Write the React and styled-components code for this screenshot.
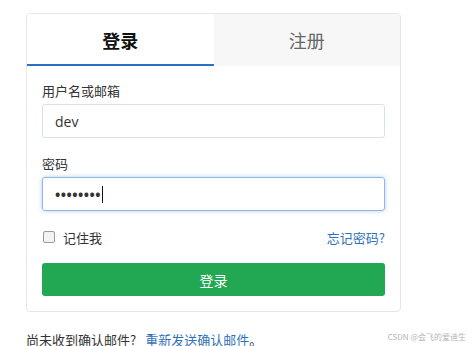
import React from "react";
import styled, { createGlobalStyle } from "styled-components";

const Global = createGlobalStyle`
  html, body { margin: 0; padding: 0; background: #fff; }
  body { font-family: "Noto Sans CJK SC", "Noto Sans", sans-serif; color: #333; }
`;

const Page = styled.div`
  width: 474px;
  height: 346px;
  position: relative;
  padding: 13px 0 0 26px;
  box-sizing: border-box;
  overflow: hidden;
`;

const Card = styled.div`
  width: 375px;
  height: 299px;
  box-sizing: border-box;
  border: 1px solid #e6e6e6;
  border-radius: 4px;
  overflow: hidden;
  display: flex;
  flex-direction: column;
`;

const Tabs = styled.div`
  display: flex;
  height: 52px;
  border-bottom: 1px solid #e9e9e9;
  box-sizing: border-box;
`;

const Tab = styled.div`
  flex: 1;
  display: flex;
  align-items: center;
  justify-content: center;
  font-size: 18px;
  font-weight: ${(p) => (p.$active ? 700 : 400)};
  color: ${(p) => (p.$active ? "#111" : "#666")};
  background: ${(p) => (p.$active ? "#fff" : "#f7f7f7")};
  border-bottom: 2px solid ${(p) => (p.$active ? "#2c6fc7" : "transparent")};
  margin-bottom: -1px;
  box-sizing: border-box;
  padding-top: 1px;
`;

const Body = styled.div`
  padding: 16px 15px 0 15px;
  display: flex;
  flex-direction: column;
`;

const Label = styled.div`
  font-size: 13px;
  color: #333;
  line-height: 18px;
  margin-bottom: 4px;
`;

const Input = styled.div`
  height: 34px;
  box-sizing: border-box;
  border: 1px solid ${(p) => (p.$focus ? "#8fb8ea" : "#d5e1ee")};
  box-shadow: ${(p) => (p.$focus ? "0 0 4px rgba(102,155,230,0.5)" : "none")};
  border-radius: 3px;
  display: flex;
  align-items: center;
  padding-left: 12px;
  font-size: 14px;
  color: #333;
  font-family: "Open Sans", "Noto Sans", sans-serif;
  margin-bottom: ${(p) => p.$mb || 0}px;
`;

const Dots = styled.span`
  letter-spacing: 0.5px;
  font-size: 14px;
  font-weight: 700;
`;

const Caret = styled.span`
  display: inline-block;
  width: 1px;
  height: 17px;
  background: #111;
  margin-left: 1px;
`;

const Row = styled.div`
  display: flex;
  align-items: center;
  justify-content: space-between;
  margin-top: 16px;
  height: 20px;
`;

const Check = styled.label`
  display: flex;
  align-items: center;
  gap: 8px;
  font-size: 13px;
  color: #333;
`;

const Box = styled.span`
  width: 10px;
  height: 10px;
  border: 1px solid #9a9a9a;
  border-radius: 2px;
  background: #f3f3f3;
  margin-left: 1px;
`;

const Link = styled.a`
  color: #2f72b8;
  font-size: 13px;
  text-decoration: none;
`;

const FooterLink = styled(Link)`
  margin-left: 9px;
`;

const Button = styled.div`
  margin-top: 16px;
  height: 33px;
  border-radius: 3px;
  background: #22a853;
  color: #fff;
  font-size: 14px;
  display: flex;
  align-items: center;
  justify-content: center;
`;

const Footer = styled.div`
  margin-top: 20px;
  font-size: 13px;
  line-height: 16px;
  color: #333;
`;

const Watermark = styled.div`
  position: absolute;
  right: 8px;
  bottom: 4px;
  font-size: 8px;
  color: #b5b5b5;
`;

export default function App() {
  return (
    <>
      <Global />
      <Page>
        <Card>
          <Tabs>
            <Tab $active>登录</Tab>
            <Tab>注册</Tab>
          </Tabs>
          <Body>
            <Label>用户名或邮箱</Label>
            <Input $mb={17}>dev</Input>
            <Label>密码</Label>
            <Input $focus>
              <Dots>••••••••</Dots>
              <Caret />
            </Input>
            <Row>
              <Check>
                <Box />
                记住我
              </Check>
              <Link>忘记密码?</Link>
            </Row>
            <Button>登录</Button>
          </Body>
        </Card>
        <Footer>
          尚未收到确认邮件?<FooterLink>重新发送确认邮件</FooterLink>。
        </Footer>
        <Watermark>CSDN @会飞的爱迪生</Watermark>
      </Page>
    </>
  );
}
